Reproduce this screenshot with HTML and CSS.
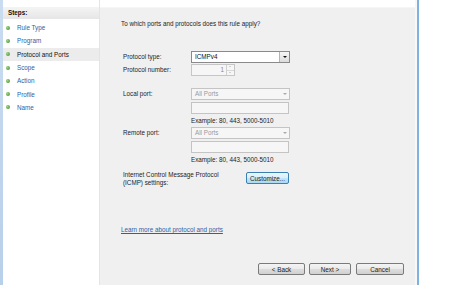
FILE: index.html
```html
<!DOCTYPE html>
<html lang="en">
<head>
  <meta charset="UTF-8" />
  <title>New Inbound Rule Wizard - Protocol and Ports</title>
  <link rel="stylesheet" href="styles.css">
</head>
<body>
  <div class="window">
    <div class="frame-left"></div>

    <!-- Steps list -->
    <aside class="steps">
      <div class="steps-top"></div>
      <div class="steps-title">Steps:</div>
      <ul class="steps-list">
        <li class="step"><span class="dot"></span>Rule Type</li>
        <li class="step"><span class="dot"></span>Program</li>
        <li class="step current"><span class="dot"></span>Protocol and Ports</li>
        <li class="step"><span class="dot"></span>Scope</li>
        <li class="step"><span class="dot"></span>Action</li>
        <li class="step"><span class="dot"></span>Profile</li>
        <li class="step"><span class="dot"></span>Name</li>
      </ul>
    </aside>

    <!-- Page content -->
    <main class="page">
      <div class="page-top"></div>
      <div class="content">
        <p class="question">To which ports and protocols does this rule apply?</p>

        <div class="form">
          <div class="row">
            <span class="label">Protocol type:</span>
            <div class="select">
              <span class="select-text">ICMPv4</span>
              <span class="select-btn"><span class="arrow"></span></span>
            </div>
          </div>
          <div class="row row-number">
            <span class="label">Protocol number:</span>
            <div class="spin">
              <span class="spin-value">1</span>
              <span class="spin-btns"><span class="up"></span><span class="down"></span></span>
            </div>
          </div>

          <div class="port-group first">
            <div class="row">
              <span class="label">Local port:</span>
              <div class="select disabled">
                <span class="select-text">All Ports</span>
                <span class="select-btn"><span class="arrow"></span></span>
              </div>
            </div>
            <div class="row">
              <span class="label"></span>
              <div class="textbox"></div>
            </div>
            <div class="row">
              <span class="label"></span>
              <span class="example">Example: 80, 443, 5000-5010</span>
            </div>
          </div>

          <div class="port-group">
            <div class="row">
              <span class="label">Remote port:</span>
              <div class="select disabled">
                <span class="select-text">All Ports</span>
                <span class="select-btn"><span class="arrow"></span></span>
              </div>
            </div>
            <div class="row">
              <span class="label"></span>
              <div class="textbox"></div>
            </div>
            <div class="row">
              <span class="label"></span>
              <span class="example">Example: 80, 443, 5000-5010</span>
            </div>
          </div>

          <div class="icmp">
            <span class="icmp-label">Internet Control Message Protocol<br>(ICMP) settings:</span>
            <button class="btn btn-default">Customize...</button>
          </div>
        </div>

        <a class="learn" href="#">Learn more about protocol and ports</a>

        <div class="actions">
          <button class="btn">&lt; Back</button>
          <button class="btn btn-next">Next &gt;</button>
          <button class="btn btn-cancel">Cancel</button>
        </div>
      </div>
    </main>

    <div class="frame-right"></div>
    <div class="outside"></div>
  </div>
</body>
</html>
```

FILE: styles.css
```css
:root {
  --face: #f0f0f0;
  --link: #2a62a8;
  --text: #1c1c1c;
}

html, body {
  margin: 0;
  height: 100%;
}

body {
  font-family: 'Liberation Sans', Arial, sans-serif;
  font-size: 6.3px;
  color: var(--text);
  background: #fff;
  overflow: hidden;
}

.window {
  display: flex;
  height: 285px;
}

.frame-left {
  flex: 0 0 3px;
  background: linear-gradient(#c9dcf0, #b9d0ea);
}

/* Steps column */
.steps {
  flex: 0 0 97px;
  background: #fff;
  border-right: 1px solid #e4e4e4;
  box-sizing: border-box;
}

.steps-top {
  height: 7px;
}

.steps-title {
  height: 12px;
  line-height: 12px;
  padding-left: 5px;
  font-weight: bold;
  color: #111;
  background: linear-gradient(#f4f4f4, #e6e6e6);
}

.steps-list {
  list-style: none;
  margin: 2px 0 0;
  padding: 0;
}

.step {
  display: flex;
  align-items: center;
  height: 13.3px;
  padding-left: 3px;
  color: var(--link);
}

.step.current {
  color: #111;
  background: #ececec;
}

.dot {
  width: 4px;
  height: 4px;
  border-radius: 50%;
  background: radial-gradient(circle at 35% 35%, #9ed47f, #3f8a2a);
  margin-right: 7px;
}

/* Main page */
.page {
  flex: 0 0 315px;
  display: flex;
  flex-direction: column;
  background: var(--face);
}

.page-top {
  height: 7px;
  background: #fff;
  border-bottom: 1px solid #f6f6f6;
}

.content {
  flex: 1;
  display: flex;
  flex-direction: column;
  padding-left: 21px;
}

.question {
  margin: 12px 0 0;
  line-height: 8px;
}

.form {
  margin: 23px 0 0 2px;
}

.row {
  display: flex;
  align-items: center;
}

.label {
  flex: 0 0 68px;
  line-height: 8px;
}

.row-number {
  margin-top: 1px;
}

.select {
  display: flex;
  width: 99px;
  height: 12px;
  box-sizing: border-box;
  border: 1px solid #8a8a8a;
  background: #fff;
}

.select-text {
  flex: 1;
  line-height: 10px;
  padding-left: 3px;
  color: #111;
}

.select-btn {
  flex: 0 0 9px;
  display: flex;
  align-items: center;
  justify-content: center;
  background: linear-gradient(#f6f6f6, #dcdcdc);
  border-left: 1px solid #b4b4b4;
}

.arrow {
  width: 0;
  height: 0;
  border-left: 2px solid transparent;
  border-right: 2px solid transparent;
  border-top: 2px solid #111;
}

.select.disabled {
  border-color: #c4c4c4;
  background: #f6f6f6;
}

.select.disabled .select-text {
  color: #9a9a9a;
}

.select.disabled .select-btn {
  background: none;
  border-left: none;
}

.select.disabled .arrow {
  border-top-color: #aaa;
}

.spin {
  display: flex;
  width: 44px;
  height: 12px;
  box-sizing: border-box;
  border: 1px solid #c6c6c6;
  background: #f6f6f6;
}

.spin-value {
  flex: 1;
  text-align: right;
  line-height: 10px;
  padding-right: 2px;
  color: #8a8a8a;
}

.spin-btns {
  flex: 0 0 7px;
  display: flex;
  flex-direction: column;
  border-left: 1px solid #d0d0d0;
}

.spin-btns span {
  flex: 1;
  position: relative;
}

.spin-btns .up {
  border-bottom: 1px solid #d8d8d8;
}

.spin-btns .up::after,
.spin-btns .down::after {
  content: "";
  position: absolute;
  left: 1.5px;
  top: 1px;
  border-left: 1.5px solid transparent;
  border-right: 1.5px solid transparent;
}

.spin-btns .up::after {
  border-bottom: 1.5px solid #aaa;
}

.spin-btns .down::after {
  border-top: 1.5px solid #aaa;
}

.port-group {
  margin-top: 2px;
}

.port-group.first {
  margin-top: 12px;
}

.textbox {
  width: 98px;
  height: 12px;
  margin-top: 2px;
  box-sizing: border-box;
  border: 1px solid #c4c4c4;
  background: #f6f6f6;
}

.example {
  line-height: 8px;
  margin-top: 3px;
}

.icmp {
  display: flex;
  align-items: flex-start;
  margin-top: 7px;
}

.icmp-label {
  flex: 0 0 123px;
  line-height: 8px;
}

.btn {
  font-family: inherit;
  font-size: 6.3px;
  color: #222;
  height: 12px;
  padding: 0;
  box-sizing: border-box;
  border: 1px solid #7a7a7a;
  border-radius: 2px;
  background: linear-gradient(#f4f4f4 0%, #ebebeb 45%, #dcdcdc 55%, #d0d0d0 100%);
}

.btn-default {
  width: 43px;
  margin-top: 1px;
  border-color: #3c7fb1;
  background: linear-gradient(#eaf6fd 0%, #d9f0fc 45%, #bee6fd 55%, #a7d9f5 100%);
}

.learn {
  margin-top: 39px;
  color: var(--link);
  line-height: 8px;
  text-decoration: underline;
  align-self: flex-start;
}

.actions {
  display: flex;
  justify-content: flex-end;
  margin: 29px 11px 0 0;
}

.actions .btn {
  width: 47px;
}

.actions .btn-next {
  width: 42px;
  margin-left: 4px;
}

.actions .btn-cancel {
  width: 48px;
  margin-left: 5px;
}

/* Window edge and desktop */
.frame-right {
  flex: 0 0 4px;
  background: linear-gradient(90deg, #f8f8f8 0 2px, #7fb3df 2px 4px);
}

.outside {
  flex: 1;
  background: #fff;
}
```
